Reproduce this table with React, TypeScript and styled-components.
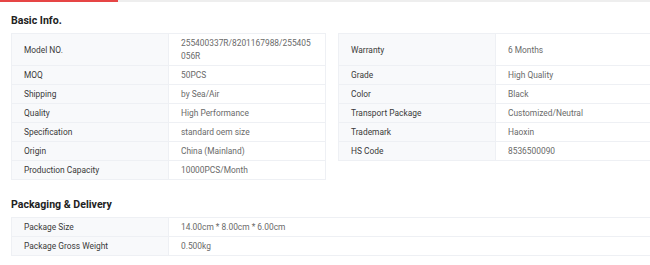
import React from 'react';
import styled, {createGlobalStyle} from "styled-components";

const GlobalStyle = createGlobalStyle`
  html, body {
    margin: 0;
    padding: 0;
    background: #ffffff;
    overflow: hidden;
  }
  body {
    font-family: Roboto, "Liberation Sans", Arial, sans-serif;
  }
`;

type Row = { label: string; value: string };

const basicLeft: Row[] = [
    {label: "Model NO.", value: "255400337R/8201167988/255405056R"},
    {label: "MOQ", value: "50PCS"},
    {label: "Shipping", value: "by Sea/Air"},
    {label: "Quality", value: "High Performance"},
    {label: "Specification", value: "standard oem size"},
    {label: "Origin", value: "China (Mainland)"},
    {label: "Production Capacity", value: "10000PCS/Month"},
];

const basicRight: Row[] = [
    {label: "Warranty", value: "6 Months"},
    {label: "Grade", value: "High Quality"},
    {label: "Color", value: "Black"},
    {label: "Transport Package", value: "Customized/Neutral"},
    {label: "Trademark", value: "Haoxin"},
    {label: "HS Code", value: "8536500090"},
];

const packaging: Row[] = [
    {label: "Package Size", value: "14.00cm * 8.00cm * 6.00cm"},
    {label: "Package Gross Weight", value: "0.500kg"},
];

// tab strip at the very top, first tab active
const TabBar = styled.div`
  height: 2px;
  background: #eeeeee;
  display: flex;
`;

const TabActive = styled.div`
  width: 118px;
  background: #e64545;
`;

const Page = styled.div`
  width: 642px;
  padding: 0 0 0 11px;
`;

const Heading = styled.h2`
  margin: 0;
  font-size: 10.6px;
  font-weight: 700;
  color: #222;
  line-height: 13px;
`;

const BasicHeading = styled(Heading)`
  padding: 12px 0 6px;
`;

const PackHeading = styled(Heading)`
  padding: 18px 0 6px;
`;

const Columns = styled.div`
  display: grid;
  grid-template-columns: 315px 315px;
  column-gap: 12px;
  align-items: start;
`;

const Table = styled.table<{ $width: number }>`
  width: ${({$width}) => $width}px;
  border-collapse: collapse;
  table-layout: fixed;
  font-size: 8.4px;
  line-height: 13px;
`;

const Cell = styled.td`
  border: 1px solid #eef0f4;
  padding: 3px 12px 2px 12px;
  vertical-align: middle;
  word-break: break-all;
`;

const LabelCell = styled(Cell)`
  width: 132px;
  background: #f8f9fb;
  color: #3a3a3a;
`;

const ValueCell = styled(Cell)`
  color: #6a6a6a;
  padding-right: 14px;
`;

const TallRow = styled.tr`
  height: 32px;
`;

const SpecTable = ({rows, width, tallFirst}: { rows: Row[]; width: number; tallFirst?: boolean }) => (
    <Table $width={width}>
        <tbody>
        {rows.map((r, i) => {
            const cells = (
                <>
                    <LabelCell>{r.label}</LabelCell>
                    <ValueCell>{r.value}</ValueCell>
                </>
            );
            return tallFirst && i === 0
                ? <TallRow key={r.label}>{cells}</TallRow>
                : <tr key={r.label}>{cells}</tr>;
        })}
        </tbody>
    </Table>
);

export default function App() {
    return (
        <>
            <GlobalStyle/>
            <TabBar><TabActive/></TabBar>
            <Page>
                <BasicHeading>Basic Info.</BasicHeading>
                <Columns>
                    <SpecTable rows={basicLeft} width={315} tallFirst/>
                    <SpecTable rows={basicRight} width={315} tallFirst/>
                </Columns>
                <PackHeading>Packaging &amp; Delivery</PackHeading>
                <SpecTable rows={packaging} width={642}/>
            </Page>
        </>
    );
}
